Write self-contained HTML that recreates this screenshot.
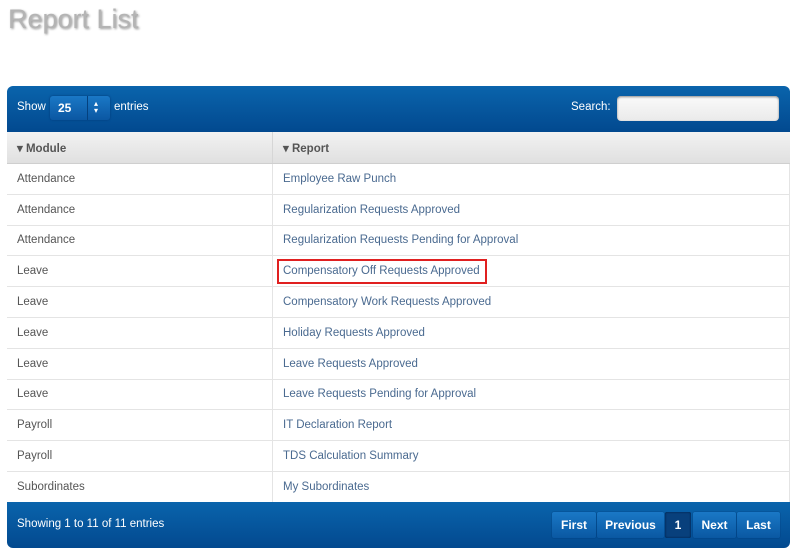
<!DOCTYPE html>
<html><head><style>
body{margin:0;width:800px;height:554px;background:#fff;font-family:"Liberation Sans",sans-serif;position:relative;overflow:hidden}
h1{position:absolute;left:8px;top:4px;margin:0;font-size:27px;font-weight:normal;color:#b4b4b4;text-shadow:1px 1px 2px #999}
.panel{position:absolute;left:7px;top:86px;width:783px;height:462px;border-radius:6px;overflow:hidden;background:#fff}
.top{position:absolute;left:0;top:0;width:783px;height:46px;background:linear-gradient(#0a64ac,#02498f);color:#fff;font-size:11.5px}
.bot{position:absolute;left:0;top:416px;width:783px;height:46px;background:linear-gradient(#0a64ac,#02498f);color:#fff;font-size:11.5px}
.sel{position:absolute;left:43px;top:10px;width:60px;height:24px;border-radius:3px;background:linear-gradient(#1a78c6,#0b57a2);box-shadow:0 0 2px #003a7a}
.sel b{position:absolute;left:8px;top:5px;font-size:12px}
.sel i{position:absolute;left:37px;top:0;width:1px;height:24px;background:#04417e}
.sel span{position:absolute;left:44px;top:4px;font-size:8px;line-height:7px;font-style:normal}
.srch{position:absolute;left:610px;top:10px;width:162px;height:25px;border-radius:4px;background:linear-gradient(#fafafa,#eaeaea);box-shadow:inset 0 1px 2px #888}
table{position:absolute;left:0;top:46px;width:783px;border-collapse:collapse;font-size:11.5px}
th{height:31px;background:linear-gradient(#f2f2f2,#e0e0e0);color:#555;text-align:left;padding:0 0 0 10px;border-right:1px solid #d6d6d6;border-bottom:1px solid #cfcfcf;font-size:11.5px}
td{height:29.8px;padding:0 0 0 10px;border-bottom:1px solid #e4e4e4;border-right:1px solid #e4e4e4;color:#555}
td.r{color:#4a6a90;position:relative}
.red{position:absolute;left:4px;top:3px;width:206px;height:21px;border:2px solid #e02020}
.pg{position:absolute;top:10px;height:26px;border-radius:2px;background:linear-gradient(#1a78c6,#0a58a2);box-shadow:0 0 1px #002f66;font-weight:bold;font-size:12px;text-align:center;line-height:26px}
</style></head><body>
<h1>Report List</h1>
<div class="panel">
<div class="top"><span style="position:absolute;left:10px;top:15px">Show</span>
<div class="sel"><b>25</b><i></i><span>▴<br>▾</span></div>
<span style="position:absolute;left:107px;top:15px">entries</span>
<span style="position:absolute;left:564px;top:15px">Search:</span><div class="srch"></div></div>
<table>
<tr><th style="width:255px">▾ Module</th><th style="border-right:none">▾ Report</th></tr>
<tr><td>Attendance</td><td class="r">Employee Raw Punch</td></tr>
<tr><td>Attendance</td><td class="r">Regularization Requests Approved</td></tr>
<tr><td>Attendance</td><td class="r">Regularization Requests Pending for Approval</td></tr>
<tr><td>Leave</td><td class="r"><div class="red"></div>Compensatory Off Requests Approved</td></tr>
<tr><td>Leave</td><td class="r">Compensatory Work Requests Approved</td></tr>
<tr><td>Leave</td><td class="r">Holiday Requests Approved</td></tr>
<tr><td>Leave</td><td class="r">Leave Requests Approved</td></tr>
<tr><td>Leave</td><td class="r">Leave Requests Pending for Approval</td></tr>
<tr><td>Payroll</td><td class="r">IT Declaration Report</td></tr>
<tr><td>Payroll</td><td class="r">TDS Calculation Summary</td></tr>
<tr><td>Subordinates</td><td class="r">My Subordinates</td></tr>
</table>
<div class="bot"><span style="position:absolute;left:10px;top:16px">Showing 1 to 11 of 11 entries</span>
<div class="pg" style="left:545px;width:44px">First</div>
<div class="pg" style="left:590px;width:67px">Previous</div>
<div class="pg" style="left:658px;width:26px;background:#08407c;box-shadow:inset 0 0 2px #001f44">1</div>
<div class="pg" style="left:686px;width:43px">Next</div>
<div class="pg" style="left:730px;width:43px">Last</div>
</div>
</div>
</body></html>
